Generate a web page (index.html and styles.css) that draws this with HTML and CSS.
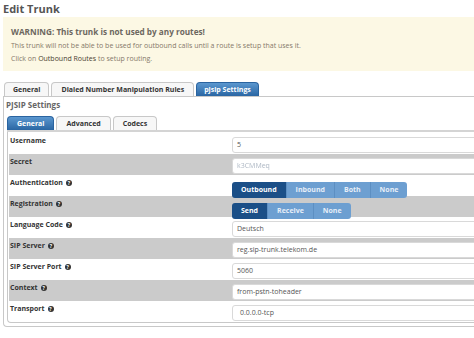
FILE: index.html
```html
<!DOCTYPE html>
<html>
<head>
<meta charset="utf-8">
<link rel="stylesheet" href="styles.css">
</head>
<body>
<div class="page">
  <h1 class="title">Edit Trunk</h1>
  <div class="alert">
    <div class="alert-title">WARNING: This trunk is not used by any routes!</div>
    <div class="alert-line">This trunk will not be able to be used for outbound calls until a route is setup that uses it.</div>
    <div class="alert-line">Click on <span class="alert-link">Outbound Routes</span> to setup routing.</div>
  </div>
  <div class="tabnav">
    <span class="tab">General</span>
    <span class="tab wide">Dialed Number Manipulation Rules</span>
    <span class="tab active narrow">pjsip Settings</span>
  </div>
  <div class="panel">
    <h2 class="panel-title">PJSIP Settings</h2>
    <div class="subnav">
      <span class="tab active">General</span>
      <span class="tab">Advanced</span>
      <span class="tab">Codecs</span>
    </div>
    <div class="subpanel">
      <div class="row">
        <div class="label">Username</div>
        <div class="field"><div class="input">5</div></div>
      </div>
      <div class="row alt">
        <div class="label">Secret</div>
        <div class="field"><div class="input"><span class="secret">k3CMMeq</span></div></div>
      </div>
      <div class="row">
        <div class="label">Authentication <span class="help">?</span></div>
        <div class="field">
          <div class="btn-group">
            <span class="btn on">Outbound</span><span class="btn">Inbound</span><span class="btn">Both</span><span class="btn">None</span>
          </div>
        </div>
      </div>
      <div class="row alt">
        <div class="label">Registration <span class="help">?</span></div>
        <div class="field">
          <div class="btn-group">
            <span class="btn on">Send</span><span class="btn">Receive</span><span class="btn">None</span>
          </div>
        </div>
      </div>
      <div class="row">
        <div class="label">Language Code <span class="help">?</span></div>
        <div class="field"><div class="input">Deutsch</div></div>
      </div>
      <div class="row alt">
        <div class="label">SIP Server <span class="help">?</span></div>
        <div class="field"><div class="input">reg.sip-trunk.telekom.de</div></div>
      </div>
      <div class="row">
        <div class="label">SIP Server Port <span class="help">?</span></div>
        <div class="field"><div class="input">5060</div></div>
      </div>
      <div class="row alt">
        <div class="label">Context <span class="help">?</span></div>
        <div class="field"><div class="input">from-pstn-toheader</div></div>
      </div>
      <div class="row">
        <div class="label">Transport <span class="help">?</span></div>
        <div class="field"><div class="input pad">0.0.0.0-tcp</div></div>
      </div>
    </div>
  </div>
</div>
</body>
</html>
```

FILE: styles.css
```css
html, body {
  margin: 0;
  padding: 0;
  background: #ffffff;
  overflow: hidden;
}
body {
  font-family: "Open Sans", "DejaVu Sans", sans-serif;
  color: #333;
}
.page {
  width: 530px;
  padding-left: 3px;
}
.title {
  margin: 0;
  padding-top: 1px;
  font-size: 11px;
  line-height: 15px;
  font-weight: 700;
  color: #555;
}
.alert {
  margin-top: 1px;
  height: 54px;
  box-sizing: border-box;
  padding: 9px 8px 0 8px;
  background: #fcf8e4;
  color: #86796a;
}
.alert-title {
  font-size: 8.2px;
  line-height: 11px;
  font-weight: 700;
  color: #6c675f;
}
.alert-line {
  font-size: 7px;
  line-height: 13px;
}
.alert-title + .alert-line {
  margin-top: 2px;
}
.alert-link {
  color: #4a4030;
}
.tabnav {
  margin-top: 11px;
  display: flex;
  gap: 2px;
  padding-left: 1px;
  border-bottom: 1px solid #c8c8c8;
}
.tab {
  display: block;
  height: 14px;
  box-sizing: border-box;
  padding: 0 8px;
  border: 1px solid #c8c8c8;
  border-bottom: none;
  border-radius: 4px 4px 0 0;
  background: #f7f7f7;
  font-size: 7px;
  line-height: 13px;
  font-weight: 700;
  color: #333;
}
.tab.active {
  background: linear-gradient(#5b97cf, #2a66a3);
  border-color: #2a64a0;
  color: #ffffff;
}
.tabnav .wide {
  padding: 0 9px;
}
.tabnav .narrow {
  padding: 0 7px;
}
.panel {
  border-left: 1px solid #c8c8c8;
  border-bottom: 1px solid #c8c8c8;
  border-bottom-left-radius: 4px;
  padding: 0 0 3px 3px;
}
.panel-title {
  margin: 0 0 0 -1px;
  font-size: 8px;
  line-height: 16px;
  font-weight: 700;
  color: #666;
}
.subnav {
  margin-top: 3px;
  display: flex;
  gap: 2px;
  border-bottom: 2px solid #d4d4d4;
}
.subnav .tab {
  padding: 0 9px;
  height: 14px;
}
.subpanel {
  border-left: 1px solid #c8c8c8;
  border-bottom: 1px solid #c8c8c8;
  border-bottom-left-radius: 4px;
  padding: 1px 0 0 1px;
}
.row {
  display: flex;
  align-items: flex-start;
  height: 21px;
}
.row.alt {
  background: #cbcbcb;
}
.label {
  width: 222px;
  padding-left: 1px;
  padding-top: 3px;
  font-size: 7px;
  line-height: 10px;
  font-weight: 700;
  color: #333;
  display: flex;
  align-items: center;
}
.help {
  display: inline-block;
  width: 6px;
  height: 6px;
  margin-left: 3px;
  border-radius: 50%;
  background: #333;
  color: #fff;
  font-size: 5px;
  line-height: 6px;
  text-align: center;
  font-weight: 700;
}
.field {
  flex: 1;
}
.input {
  margin-top: 4px;
  height: 16px;
  box-sizing: border-box;
  border: 1px solid #d9d9d9;
  border-radius: 3px;
  background: #fff;
  padding-left: 4px;
  font-size: 7px;
  line-height: 14px;
  color: #555;
}
.input.pad {
  padding-left: 7px;
}
.secret {
  color: #aeb8c4;
  filter: blur(0.7px);
}
.btn-group {
  margin-top: 2px;
  display: inline-flex;
  height: 16px;
  border-radius: 3px;
  overflow: hidden;
}
.btn {
  display: block;
  padding: 0 9px;
  background: #6d9fd1;
  color: #e6eef8;
  font-size: 7px;
  line-height: 16px;
  font-weight: 700;
  border-left: 1px solid #5d8fc2;
}
.btn:first-child {
  border-left: none;
}
.btn.on {
  background: #1b4f87;
  color: #ffffff;
}
```
